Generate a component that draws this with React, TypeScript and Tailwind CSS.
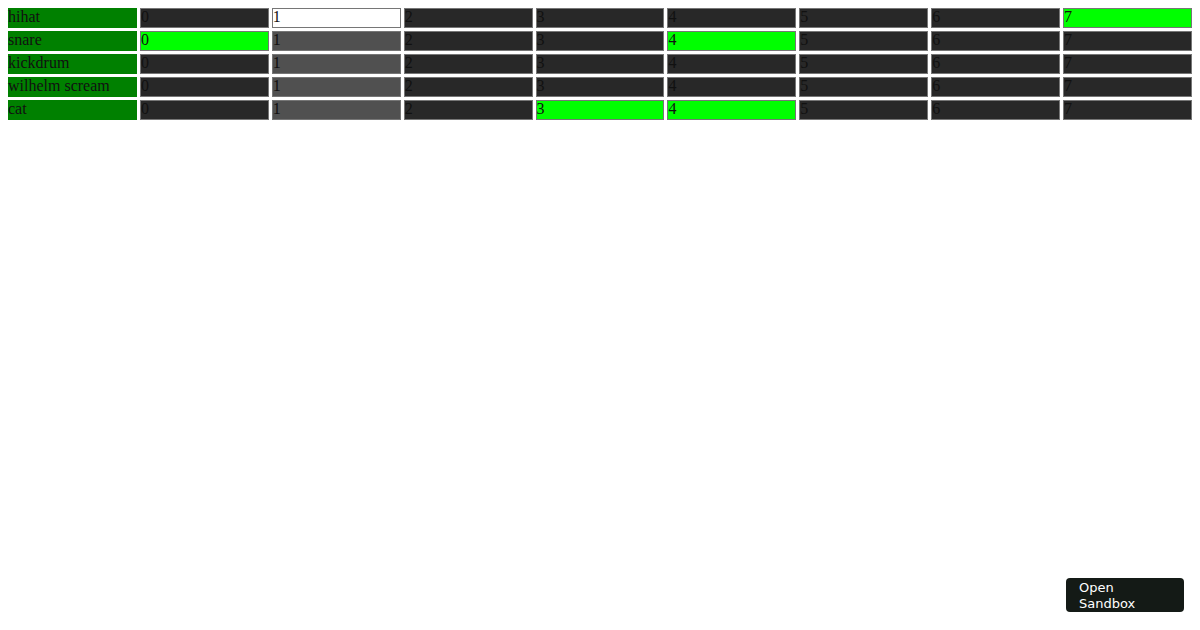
import React from "react";

const tracks = [
  { name: "hihat", on: [7] },
  { name: "snare", on: [0, 4] },
  { name: "kickdrum", on: [] },
  { name: "wilhelm scream", on: [] },
  { name: "cat", on: [3, 4] },
];

const steps = [0, 1, 2, 3, 4, 5, 6, 7];

function cellColor(row: number, step: number, on: boolean) {
  if (on) return "bg-[#00ff00]";
  if (step === 1) return row === 0 ? "bg-white" : "bg-[#505050]";
  return "bg-[#282828]";
}

export default function App() {
  return (
    <div className="relative h-[630px] w-[1200px] bg-white p-2 font-['Liberation_Serif',serif] text-base text-[#111]">
      <div className="grid grid-cols-9 gap-x-[3px] gap-y-[3px]">
        {tracks.map((track, row) => (
          <React.Fragment key={track.name}>
            <div className="h-5 bg-[#008000] leading-[18px]">{track.name}</div>
            {steps.map((step) => (
              <div
                key={step}
                className={`h-5 border border-[#767676] leading-4 ${cellColor(
                  row,
                  step,
                  track.on.includes(step)
                )}`}
              >
                {step}
              </div>
            ))}
          </React.Fragment>
        ))}
      </div>
      <button className="absolute bottom-[18px] right-4 h-[34px] w-[118px] rounded bg-[#141a16] pl-[13px] pt-px text-left font-['DejaVu_Sans',sans-serif] text-[13px] leading-4 text-white">
        Open
        <br />
        Sandbox
      </button>
    </div>
  );
}
